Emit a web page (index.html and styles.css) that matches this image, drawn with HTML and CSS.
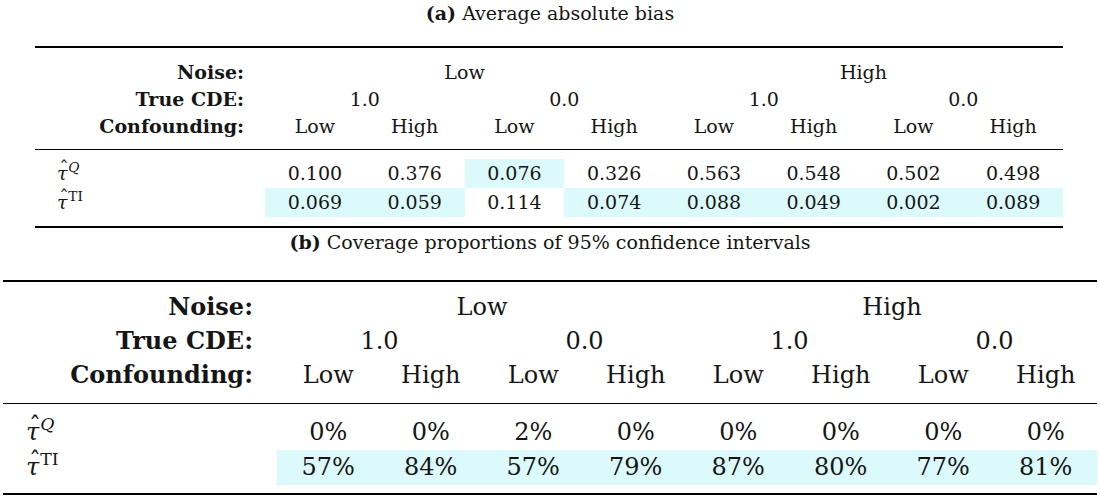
FILE: index.html
```html
<!DOCTYPE html>
<html>
<head>
<meta charset="utf-8">
<link rel="stylesheet" href="styles.css">
</head>
<body>
<section class="panel panel-a">
  <div class="caption"><b>(a)</b> Average absolute bias</div>
  <div class="tbl">
    <div class="head">
      <div class="lab">Noise:</div>
      <div class="c span4">Low</div>
      <div class="c span4">High</div>
      <div class="lab">True CDE:</div>
      <div class="c span2">1.0</div>
      <div class="c span2">0.0</div>
      <div class="c span2">1.0</div>
      <div class="c span2">0.0</div>
      <div class="lab">Confounding:</div>
      <div class="c">Low</div><div class="c">High</div><div class="c">Low</div><div class="c">High</div>
      <div class="c">Low</div><div class="c">High</div><div class="c">Low</div><div class="c">High</div>
    </div>
    <div class="body">
      <div class="est"><span class="tau">τ</span><sup class="sup it">Q</sup></div>
      <div class="c">0.100</div><div class="c">0.376</div><div class="c hl">0.076</div><div class="c">0.326</div>
      <div class="c">0.563</div><div class="c">0.548</div><div class="c">0.502</div><div class="c">0.498</div>
      <div class="est"><span class="tau">τ</span><sup class="sup">TI</sup></div>
      <div class="c hl">0.069</div><div class="c hl">0.059</div><div class="c">0.114</div><div class="c hl">0.074</div>
      <div class="c hl">0.088</div><div class="c hl">0.049</div><div class="c hl">0.002</div><div class="c hl">0.089</div>
    </div>
  </div>
</section>
<section class="panel panel-b">
  <div class="caption"><b>(b)</b> Coverage proportions of 95% confidence intervals</div>
  <div class="tbl">
    <div class="head">
      <div class="lab">Noise:</div>
      <div class="c span4">Low</div>
      <div class="c span4">High</div>
      <div class="lab">True CDE:</div>
      <div class="c span2">1.0</div>
      <div class="c span2">0.0</div>
      <div class="c span2">1.0</div>
      <div class="c span2">0.0</div>
      <div class="lab">Confounding:</div>
      <div class="c">Low</div><div class="c">High</div><div class="c">Low</div><div class="c">High</div>
      <div class="c">Low</div><div class="c">High</div><div class="c">Low</div><div class="c">High</div>
    </div>
    <div class="body">
      <div class="est"><span class="tau">τ</span><sup class="sup it">Q</sup></div>
      <div class="c">0%</div><div class="c">0%</div><div class="c">2%</div><div class="c">0%</div>
      <div class="c">0%</div><div class="c">0%</div><div class="c">0%</div><div class="c">0%</div>
      <div class="est"><span class="tau">τ</span><sup class="sup">TI</sup></div>
      <div class="c hl">57%</div><div class="c hl">84%</div><div class="c hl">57%</div><div class="c hl">79%</div>
      <div class="c hl">87%</div><div class="c hl">80%</div><div class="c hl">77%</div><div class="c hl">81%</div>
    </div>
  </div>
</section>
</body>
</html>
```
FILE: styles.css
```css
html, body {
  margin: 0;
  padding: 0;
  background: #ffffff;
}
body {
  width: 1100px;
  height: 497px;
  overflow: hidden;
  font-family: "DejaVu Serif", "Liberation Serif", serif;
  color: #151515;
}
.caption {
  font-size: 19px;
  line-height: 26px;
  text-align: center;
}
.caption b {
  font-weight: bold;
}
.tbl .head,
.tbl .body {
  display: grid;
}
.lab {
  font-weight: bold;
  text-align: right;
}
.c {
  text-align: center;
}
.span4 { grid-column: span 4; }
.span2 { grid-column: span 2; }
.hl {
  background: #dcfafc;
}
.est {
  white-space: nowrap;
}
.tau {
  position: relative;
  font-style: italic;
}
.tau::after {
  content: "ˆ";
  position: absolute;
  font-style: normal;
  left: 0.12em;
  top: -0.16em;
  line-height: 1;
}
.sup {
  font-size: 0.72em;
  line-height: 0;
  vertical-align: baseline;
  position: relative;
  top: -0.6em;
  margin-left: 0.06em;
}
.sup.it {
  font-style: italic;
}

/* panel a */
.panel-a .caption {
  margin-bottom: 20px;
}
.panel-a .tbl {
  margin-left: 35px;
  width: 1028px;
  font-size: 19px;
}
.panel-a .head,
.panel-a .body {
  grid-template-columns: 230px repeat(8, 1fr);
}
.panel-a .head {
  border-top: 2px solid #000;
  border-bottom: 1px solid #000;
  padding: 11px 0 9px;
  line-height: 27px;
}
.panel-a .head .lab {
  padding-right: 21px;
}
.panel-a .body {
  border-bottom: 2px solid #000;
  padding: 9px 0 9px;
  line-height: 29px;
}
.panel-a .est {
  padding-left: 22px;
}

/* panel b */
.panel-b .caption {
  margin-top: 1px;
  margin-bottom: 25px;
}
.panel-b .tbl {
  margin-left: 3px;
  width: 1094px;
  font-size: 24px;
}
.panel-b .head,
.panel-b .body {
  grid-template-columns: 274px repeat(8, 1fr);
}
.panel-b .head {
  border-top: 2px solid #000;
  border-bottom: 1px solid #000;
  padding: 8px 0 11px;
  line-height: 34px;
}
.panel-b .head .lab {
  padding-right: 24px;
}
.panel-b .body {
  border-bottom: 2px solid #000;
  padding: 11px 0 8px;
  line-height: 35px;
}
.panel-b .est {
  padding-left: 23px;
}
```
